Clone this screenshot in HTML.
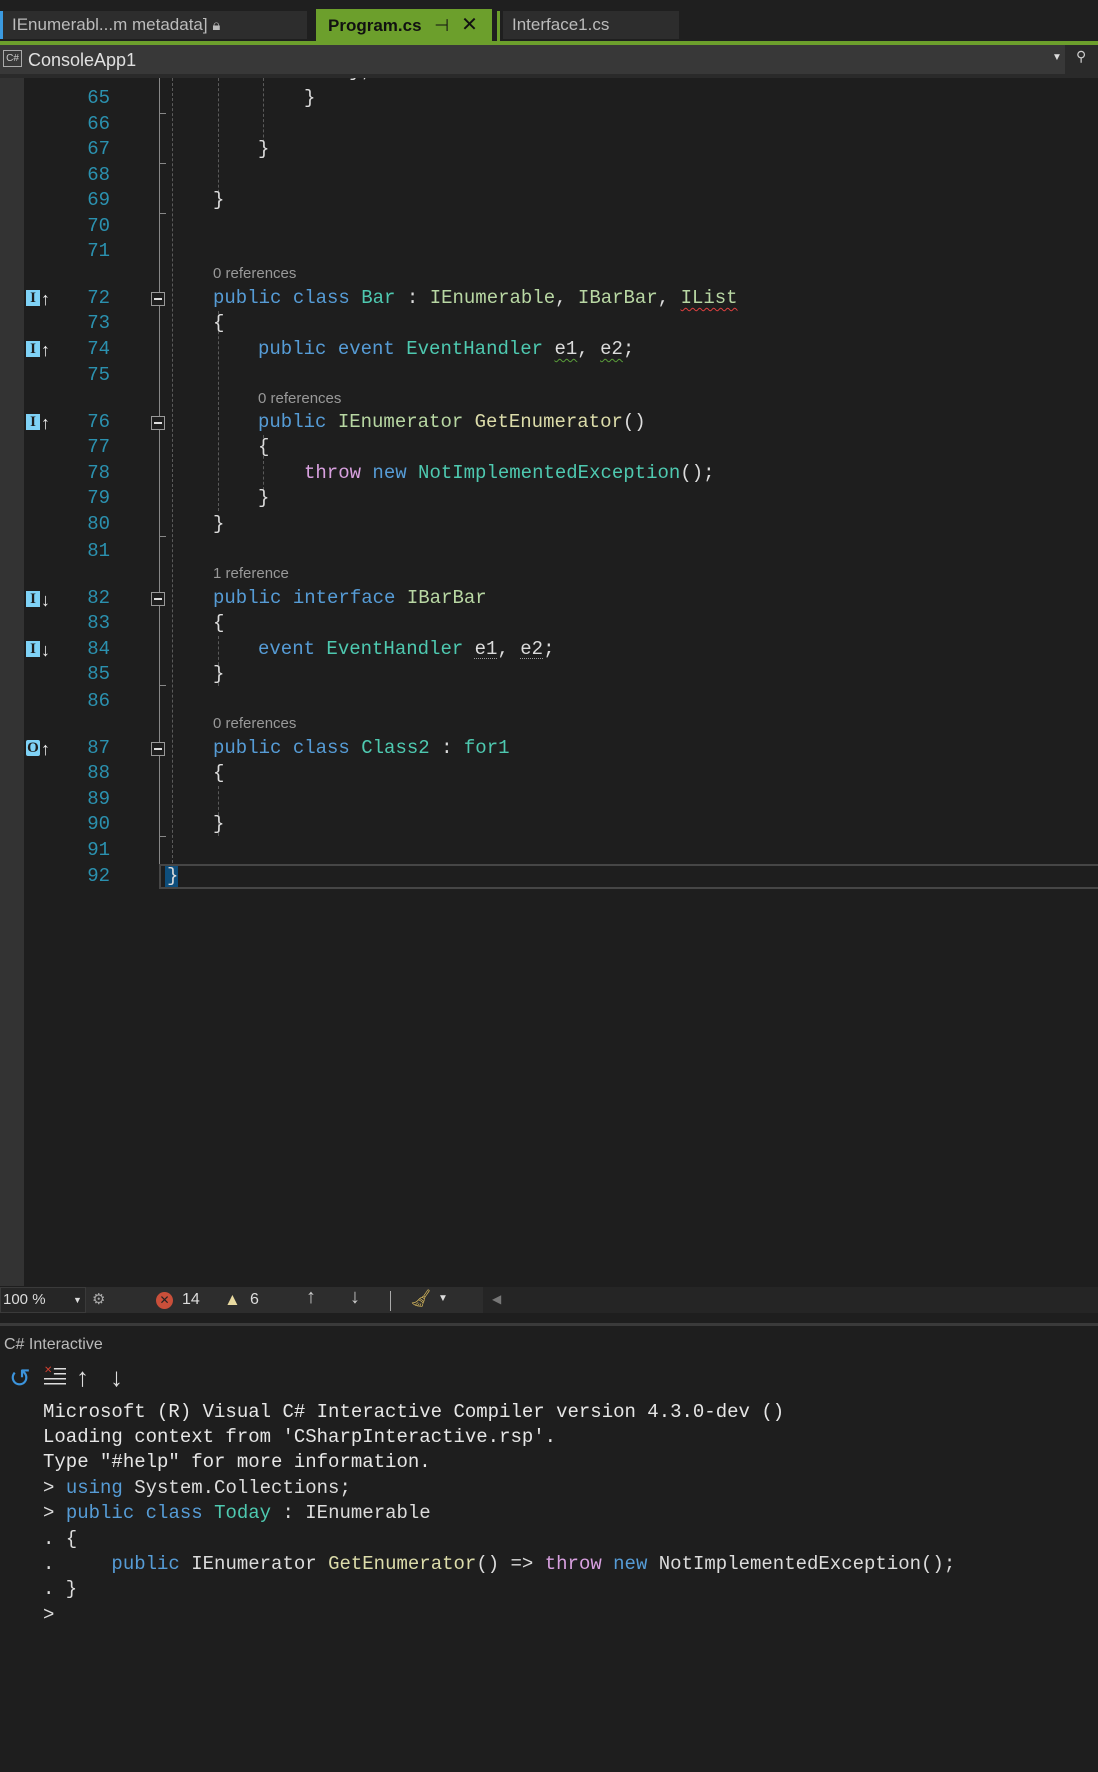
<!DOCTYPE html>
<html><head><meta charset="utf-8"><style>
*{margin:0;padding:0;box-sizing:border-box}
body{width:1098px;height:1772px;background:#1e1e1e;position:relative;overflow:hidden;font-family:"Liberation Sans",sans-serif;color:#dcdcdc}
.a{position:absolute;white-space:pre}
.m{font-family:"Liberation Mono",monospace;font-size:19px;line-height:25px}
.ln{position:absolute;left:60px;width:50px;text-align:right;color:#2b91af;font-family:"Liberation Mono",monospace;font-size:19px;line-height:25px}
.k{color:#569cd6}.t{color:#4ec9b0}.i{color:#b8d7a3}.f{color:#dcdcaa}.c{color:#d8a0df}
.lens{position:absolute;font-size:15px;color:#999;line-height:20px}
.g{position:absolute;width:0;border-left:1px dashed #5a5a5a}
.box{position:absolute;left:151px;width:14px;height:14px;border:1px solid #999;background:#1e1e1e}
.box:after{content:"";position:absolute;left:2px;right:2px;top:5px;height:2px;background:#ddd}
.gi{position:absolute;left:26px;font-size:18px;line-height:18px;color:#eee}
.gi b{display:inline-block;width:14px;height:16px;background:#7fd2f6;color:#1e1e1e;font-family:"Liberation Serif",serif;text-align:center;font-size:15px;line-height:16px;vertical-align:top;margin-right:1px}
.sq{text-decoration:underline wavy;text-underline-offset:4px;text-decoration-thickness:1px}
</style></head><body>
<div class="a" style="left:0;top:0;width:1098px;height:41px;background:#1f1f1f"></div>
<div class="a" style="left:0;top:11px;width:3px;height:28px;background:#3b9ae0"></div>
<div class="a" style="left:3px;top:11px;width:304px;height:28px;background:#2d2d2d;color:#bbb;font-size:17px;line-height:28px;padding-left:9px">IEnumerabl...m metadata] <span style="font-size:15px">🔒︎</span></div>
<div class="a" style="left:316px;top:9px;width:176px;height:32px;background:#6c9f2c;color:#111;font-weight:bold;font-size:17px;line-height:32px;padding-left:12px">Program.cs <span style="font-weight:normal;margin-left:8px">⊣</span><span style="font-weight:normal;margin-left:12px;font-size:20px">✕</span></div>
<div class="a" style="left:497px;top:11px;width:3px;height:30px;background:#6c9f2c"></div>
<div class="a" style="left:503px;top:11px;width:176px;height:28px;background:#2d2d2d;color:#bbb;font-size:17px;line-height:28px;padding-left:9px">Interface1.cs</div>
<div class="a" style="left:0;top:41px;width:1098px;height:4px;background:#6c9f2c"></div>
<div class="a" style="left:0;top:45px;width:1065px;height:29px;background:#383838"></div>
<div class="a" style="left:1065px;top:45px;width:33px;height:29px;background:#2a2a2a"></div>
<div class="a" style="left:3px;top:50px;width:19px;height:17px;border:1px solid #aaa;font-size:10px;color:#ccc;line-height:15px;text-align:center">C#</div>
<div class="a" style="left:28px;top:47px;font-size:18px;line-height:26px;color:#e0e0e0">ConsoleApp1</div>
<div class="a" style="left:1052px;top:52px;font-size:10px;color:#ddd">▼</div>
<div class="a" style="left:1076px;top:48px;font-size:14px;color:#ccc">⚲</div>
<div class="a" style="left:0;top:74px;width:1098px;height:4px;background:#2a2a2a"></div>
<div class="a" style="left:0;top:78px;width:1098px;height:1208px;overflow:hidden;background:#1e1e1e">
 <div class="a" style="left:0;top:-78px;width:24px;height:1300px;background:#333"></div>
 <div style="position:absolute;left:0;top:-78px;width:1098px;height:1300px">
  <div class="a" style="left:159px;top:78px;width:1px;height:811px;background:#888"></div>
  <div class="a" style="left:159px;top:888px;width:8px;height:1px;background:#888"></div>
  <div class="g" style="left:172px;top:78px;height:785px"></div>
  <div class="g" style="left:218px;top:78px;height:130px"></div>
  <div class="g" style="left:263px;top:78px;height:80px"></div>
  <div class="g" style="left:218px;top:311px;height:200px"></div>
  <div class="g" style="left:263px;top:435px;height:55px"></div>
  <div class="g" style="left:218px;top:636px;height:50px"></div>
  <div class="g" style="left:218px;top:786px;height:50px"></div>
  <div class="a" style="left:159px;top:864px;width:939px;height:25px;border:2px solid #464646;border-right:none"></div>
  <div class="a" style="left:165px;top:866px;width:13px;height:21px;background:#0e4e7c"></div>
  <div class="a" style="left:159px;top:113px;width:7px;height:1px;background:#888"></div>
  <div class="a" style="left:159px;top:163px;width:7px;height:1px;background:#888"></div>
  <div class="a" style="left:159px;top:213px;width:7px;height:1px;background:#888"></div>
  <div class="a" style="left:159px;top:536px;width:7px;height:1px;background:#888"></div>
  <div class="a" style="left:159px;top:685px;width:7px;height:1px;background:#888"></div>
  <div class="a" style="left:159px;top:836px;width:7px;height:1px;background:#888"></div>

  <div class="a m" style="left:349px;top:59px">};</div>
  <div class="ln" style="top:86px">65</div><div class="a m" style="left:304px;top:86px">}</div>
  <div class="ln" style="top:112px">66</div>
  <div class="ln" style="top:137px">67</div><div class="a m" style="left:258px;top:137px">}</div>
  <div class="ln" style="top:163px">68</div>
  <div class="ln" style="top:188px">69</div><div class="a m" style="left:213px;top:188px">}</div>
  <div class="ln" style="top:214px">70</div>
  <div class="ln" style="top:239px">71</div>
  <div class="lens" style="left:213px;top:264px">0 references</div>
  <div class="gi" style="top:290px"><b>I</b>↑</div>
  <div class="box" style="top:292px"></div>
  <div class="ln" style="top:286px">72</div><div class="a m" style="left:213px;top:286px"><span class="k">public</span> <span class="k">class</span> <span class="t">Bar</span> : <span class="i">IEnumerable</span>, <span class="i">IBarBar</span>, <span class="i sq" style="text-decoration-color:#e04040">IList</span></div>
  <div class="ln" style="top:311px">73</div><div class="a m" style="left:213px;top:311px">{</div>
  <div class="gi" style="top:341px"><b>I</b>↑</div>
  <div class="ln" style="top:337px">74</div><div class="a m" style="left:258px;top:337px"><span class="k">public</span> <span class="k">event</span> <span class="t">EventHandler</span> <span class="sq" style="text-decoration-color:#5a9e3a">e1</span>, <span class="sq" style="text-decoration-color:#5a9e3a">e2</span>;</div>
  <div class="ln" style="top:363px">75</div>
  <div class="lens" style="left:258px;top:389px">0 references</div>
  <div class="gi" style="top:414px"><b>I</b>↑</div>
  <div class="box" style="top:416px"></div>
  <div class="ln" style="top:410px">76</div><div class="a m" style="left:258px;top:410px"><span class="k">public</span> <span class="i">IEnumerator</span> <span class="f">GetEnumerator</span>()</div>
  <div class="ln" style="top:435px">77</div><div class="a m" style="left:258px;top:435px">{</div>
  <div class="ln" style="top:461px">78</div><div class="a m" style="left:304px;top:461px"><span class="c">throw</span> <span class="k">new</span> <span class="t">NotImplementedException</span>();</div>
  <div class="ln" style="top:486px">79</div><div class="a m" style="left:258px;top:486px">}</div>
  <div class="ln" style="top:512px">80</div><div class="a m" style="left:213px;top:512px">}</div>
  <div class="ln" style="top:539px">81</div>
  <div class="lens" style="left:213px;top:564px">1 reference</div>
  <div class="gi" style="top:591px"><b>I</b>↓</div>
  <div class="box" style="top:592px"></div>
  <div class="ln" style="top:586px">82</div><div class="a m" style="left:213px;top:586px"><span class="k">public</span> <span class="k">interface</span> <span class="i">IBarBar</span></div>
  <div class="ln" style="top:611px">83</div><div class="a m" style="left:213px;top:611px">{</div>
  <div class="gi" style="top:641px"><b>I</b>↓</div>
  <div class="ln" style="top:637px">84</div><div class="a m" style="left:258px;top:637px"><span class="k">event</span> <span class="t">EventHandler</span> <span class="sq" style="text-decoration-style:dotted;text-decoration-color:#999">e1</span>, <span class="sq" style="text-decoration-style:dotted;text-decoration-color:#999">e2</span>;</div>
  <div class="ln" style="top:662px">85</div><div class="a m" style="left:213px;top:662px">}</div>
  <div class="ln" style="top:689px">86</div>
  <div class="lens" style="left:213px;top:714px">0 references</div>
  <div class="gi" style="top:740px"><b style="border-radius:2px">O</b>↑</div>
  <div class="box" style="top:742px"></div>
  <div class="ln" style="top:736px">87</div><div class="a m" style="left:213px;top:736px"><span class="k">public</span> <span class="k">class</span> <span class="t">Class2</span> : <span class="t">for1</span></div>
  <div class="ln" style="top:761px">88</div><div class="a m" style="left:213px;top:761px">{</div>
  <div class="ln" style="top:787px">89</div>
  <div class="ln" style="top:812px">90</div><div class="a m" style="left:213px;top:812px">}</div>
  <div class="ln" style="top:838px">91</div>
  <div class="ln" style="top:864px">92</div><div class="a m" style="left:167px;top:864px">}</div>
 </div>
</div>
<div class="a" style="left:0;top:1287px;width:1098px;height:26px;background:#2d2d2d"></div>
<div class="a" style="left:0;top:1287px;width:86px;height:26px;background:#262626;border:1px solid #3a3a3a;font-size:15px;line-height:24px;padding-left:2px">100 %<span style="position:absolute;left:72px;font-size:9px">▼</span></div>
<div class="a" style="left:92px;top:1290px;font-size:15px;color:#aaa">⚙</div>
<div class="a" style="left:156px;top:1292px;width:17px;height:17px;border-radius:50%;background:#c94f3a;color:#222;font-size:12px;line-height:17px;text-align:center">✕</div>
<div class="a" style="left:182px;top:1288px;font-size:16px;line-height:24px">14</div>
<div class="a" style="left:224px;top:1289px;font-size:17px;color:#e8d9a0;line-height:22px">▲</div>
<div class="a" style="left:250px;top:1288px;font-size:16px;line-height:24px">6</div>
<div class="a" style="left:306px;top:1286px;font-size:20px;color:#ccc">↑</div>
<div class="a" style="left:350px;top:1286px;font-size:20px;color:#ccc">↓</div>
<div class="a" style="left:390px;top:1291px;width:1px;height:20px;background:#aaa"></div>
<div class="a" style="left:410px;top:1289px;font-size:17px;color:#e0c060">🧹︎</div>
<div class="a" style="left:438px;top:1293px;font-size:10px">▼</div>
<div class="a" style="left:483px;top:1287px;width:615px;height:26px;background:#252525"></div>
<div class="a" style="left:492px;top:1292px;font-size:12px;color:#777">◀</div>
<div class="a" style="left:0;top:1323px;width:1098px;height:3px;background:#3a3a3a"></div>
<div class="a" style="left:4px;top:1334px;font-size:16px;color:#bbb;line-height:22px">C# Interactive</div>
<div class="a" style="left:9px;top:1364px;font-size:26px;color:#3c94dc;line-height:28px">↺</div>
<div class="a" style="left:44px;top:1366px;font-size:10px;color:#d04030;line-height:10px">✕</div>
<div class="a" style="left:44px;top:1366px;width:22px;height:22px;background:repeating-linear-gradient(#1e1e1e 0 2px,#ddd 2px 3.5px,#1e1e1e 3.5px 5px);clip-path:polygon(45% 0,100% 0,100% 100%,0 100%,0 45%,45% 45%)"></div>
<div class="a" style="left:76px;top:1362px;font-size:26px;color:#ddd">↑</div>
<div class="a" style="left:110px;top:1362px;font-size:26px;color:#ddd">↓</div>
<div class="a m" style="left:43px;top:1400px;color:#e6e6e6">Microsoft (R) Visual C# Interactive Compiler version 4.3.0-dev ()</div>
<div class="a m" style="left:43px;top:1425px;color:#e6e6e6">Loading context from 'CSharpInteractive.rsp'.</div>
<div class="a m" style="left:43px;top:1450px;color:#e6e6e6">Type "#help" for more information.</div>
<div class="a m" style="left:43px;top:1476px">&gt; <span class="k">using</span> System.Collections;</div>
<div class="a m" style="left:43px;top:1501px">&gt; <span class="k">public</span> <span class="k">class</span> <span class="t">Today</span> : IEnumerable</div>
<div class="a m" style="left:43px;top:1527px">. {</div>
<div class="a m" style="left:43px;top:1552px">.     <span class="k">public</span> IEnumerator <span class="f">GetEnumerator</span>() =&gt; <span class="c">throw</span> <span class="k">new</span> NotImplementedException();</div>
<div class="a m" style="left:43px;top:1577px">. }</div>
<div class="a m" style="left:43px;top:1603px">&gt;</div>
</body></html>
